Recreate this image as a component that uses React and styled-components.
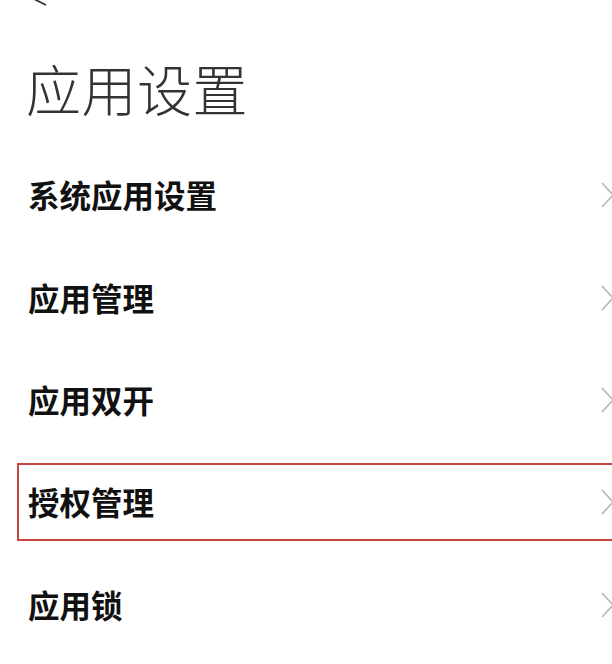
import React from "react";
import styled, { createGlobalStyle } from "styled-components";

const GlobalStyle = createGlobalStyle`
  html, body {
    margin: 0;
    padding: 0;
    background: #ffffff;
    overflow: hidden;
  }
  body {
    font-family: "Noto Sans CJK SC", "Noto Sans", sans-serif;
  }
`;

const Page = styled.div`
  width: 612px;
  height: 664px;
  overflow: hidden;
  background: #ffffff;
`;

const TopBar = styled.div`
  height: 16px;
  margin-top: -8px;
  padding-left: 32px;
  display: flex;
  align-items: center;
`;

const Title = styled.h1`
  margin: 52px 0 30px 26px;
  font-size: 55px;
  line-height: 54px;
  font-weight: 300;
  color: #333333;
  letter-spacing: 0.5px;
`;

const List = styled.div`
  display: flex;
  flex-direction: column;
  padding-left: 17px;
`;

const Row = styled.div`
  height: 102.4px;
  display: flex;
  align-items: center;
`;

const Item = styled.div`
  box-sizing: border-box;
  flex: 0 0 auto;
  width: calc(100% + 22px);
  height: 78px;
  display: flex;
  align-items: center;
  justify-content: space-between;
  padding: 0 18px 0 9px;
  border: 2px solid ${(p) => (p.$active ? "#c8463e" : "transparent")};
`;

const Label = styled.span`
  font-size: 31.5px;
  line-height: 40px;
  font-weight: 700;
  color: #111111;
  transform: translateY(-1px);
`;

const Chevron = () => (
  <svg width="13" height="26" viewBox="0 0 13 26">
    <polyline
      points="1,1 12,13 1,25"
      fill="none"
      stroke="#b4b4b4"
      strokeWidth="1.6"
    />
  </svg>
);

const items = [
  { label: "系统应用设置" },
  { label: "应用管理" },
  { label: "应用双开" },
  { label: "授权管理", active: true },
  { label: "应用锁" },
];

export default function App() {
  return (
    <Page>
      <GlobalStyle />
      <TopBar>
        <svg width="16" height="16" viewBox="0 0 16 16">
          <polyline
            points="14,1 2,7 14,13"
            fill="none"
            stroke="#333333"
            strokeWidth="1.8"
          />
        </svg>
      </TopBar>
      <Title>应用设置</Title>
      <List>
        {items.map((it) => (
          <Row key={it.label}>
            <Item $active={it.active}>
              <Label>{it.label}</Label>
              <Chevron />
            </Item>
          </Row>
        ))}
      </List>
    </Page>
  );
}
